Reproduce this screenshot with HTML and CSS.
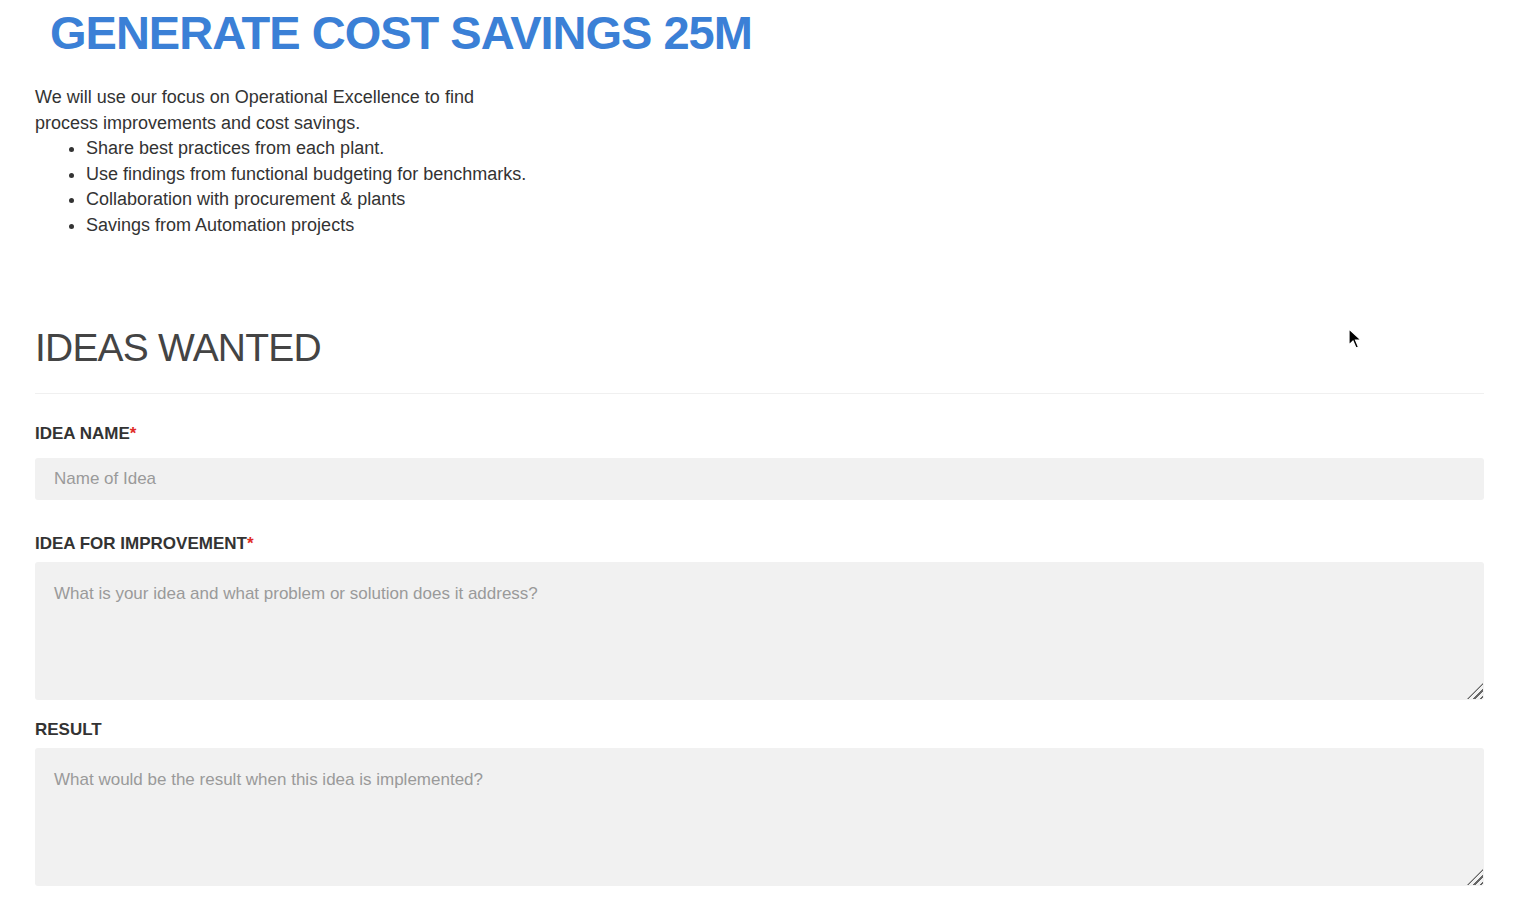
FILE: index.html
```html
<!DOCTYPE html>
<html lang="en">
<head>
<meta charset="UTF-8">
<meta name="viewport" content="width=device-width, initial-scale=1.0">
<title>Ideas Wanted</title>
<link rel="stylesheet" href="styles.css">
</head>
<body>
<div class="page">
    <h1 class="goal-title">GENERATE COST SAVINGS 25M</h1>
    <div class="goal-text">
        <p>We will use our focus on Operational Excellence to find process improvements and cost savings.</p>
        <ul>
            <li>Share best practices from each plant.</li>
            <li>Use findings from functional budgeting for benchmarks.</li>
            <li>Collaboration with procurement &amp; plants</li>
            <li>Savings from Automation projects</li>
        </ul>
    </div>

    <h2 class="form-title">IDEAS WANTED</h2>

    <form class="idea-form">
        <div class="field field-input">
            <label for="ideaName">IDEA NAME<span class="req">*</span></label>
            <input type="text" id="ideaName" placeholder="Name of Idea">
        </div>
        <div class="field">
            <label for="ideaText">IDEA FOR IMPROVEMENT<span class="req">*</span></label>
            <textarea id="ideaText" placeholder="What is your idea and what problem or solution does it address?"></textarea>
            <span class="grip"></span>
        </div>
        <div class="field">
            <label for="ideaResult">RESULT</label>
            <textarea id="ideaResult" placeholder="What would be the result when this idea is implemented?"></textarea>
            <span class="grip"></span>
        </div>
    </form>
</div>

<svg class="pointer" width="14" height="22" viewBox="0 0 14 22">
    <path d="M1 1 L1 17 L5 13 L8 20 L10.5 19 L7.5 12 L13 12 Z" fill="#000" stroke="#fff" stroke-width="1.2"/>
</svg>
</body>
</html>
```

FILE: styles.css
```css
body {
    font-family: "Liberation Sans", Arial, sans-serif;
    margin: 0;
    padding: 0;
    background-color: #ffffff;
    color: #333333;
}
.page {
    padding: 0 52px 0 35px;
}
.goal-title {
    margin: 0;
    padding: 6px 0 0 15px;
    font-size: 47px;
    font-weight: bold;
    letter-spacing: -1px;
    color: #3b80d6;
    line-height: 54px;
}
.goal-text {
    margin-top: 25px;
    font-size: 18px;
    line-height: 25.5px;
    color: #333333;
}
.goal-text p {
    max-width: 490px;
    margin: 0;
}
.goal-text ul {
    margin: 0;
    padding-left: 51px;
}
.form-title {
    margin: 87px 0 0 0;
    padding-bottom: 22px;
    font-size: 39px;
    font-weight: normal;
    letter-spacing: -0.8px;
    color: #444444;
    border-bottom: 1px solid #f0f0f0;
    line-height: 46px;
}
.idea-form {
    padding-top: 30px;
}
.field {
    position: relative;
    margin-bottom: 20px;
}
.field label {
    display: block;
    font-size: 17px;
    font-weight: bold;
    color: #333333;
    margin-bottom: 8px;
}
.field-input {
    margin-bottom: 34px;
}
.field-input label {
    margin-bottom: 14px;
}
.req {
    color: #e02b27;
}
input[type="text"],
textarea {
    display: block;
    box-sizing: border-box;
    width: 100%;
    border: none;
    border-radius: 3px;
    background-color: #f1f1f1;
    font-family: "Liberation Sans", Arial, sans-serif;
    font-size: 17px;
    color: #333333;
    padding: 0 19px;
    outline: none;
}
input[type="text"] {
    height: 42px;
}
textarea {
    height: 138px;
    padding-top: 22px;
    resize: none;
}
::placeholder {
    color: #9a9a9a;
}
.grip {
    position: absolute;
    right: 1px;
    bottom: 1px;
    width: 16px;
    height: 16px;
    background: repeating-linear-gradient(135deg, transparent 0 2px, #666666 2px 3.6px, transparent 3.6px 4.5px);
    clip-path: polygon(100% 0, 100% 100%, 0 100%);
}
.pointer {
    position: absolute;
    left: 1348px;
    top: 328px;
}
```
